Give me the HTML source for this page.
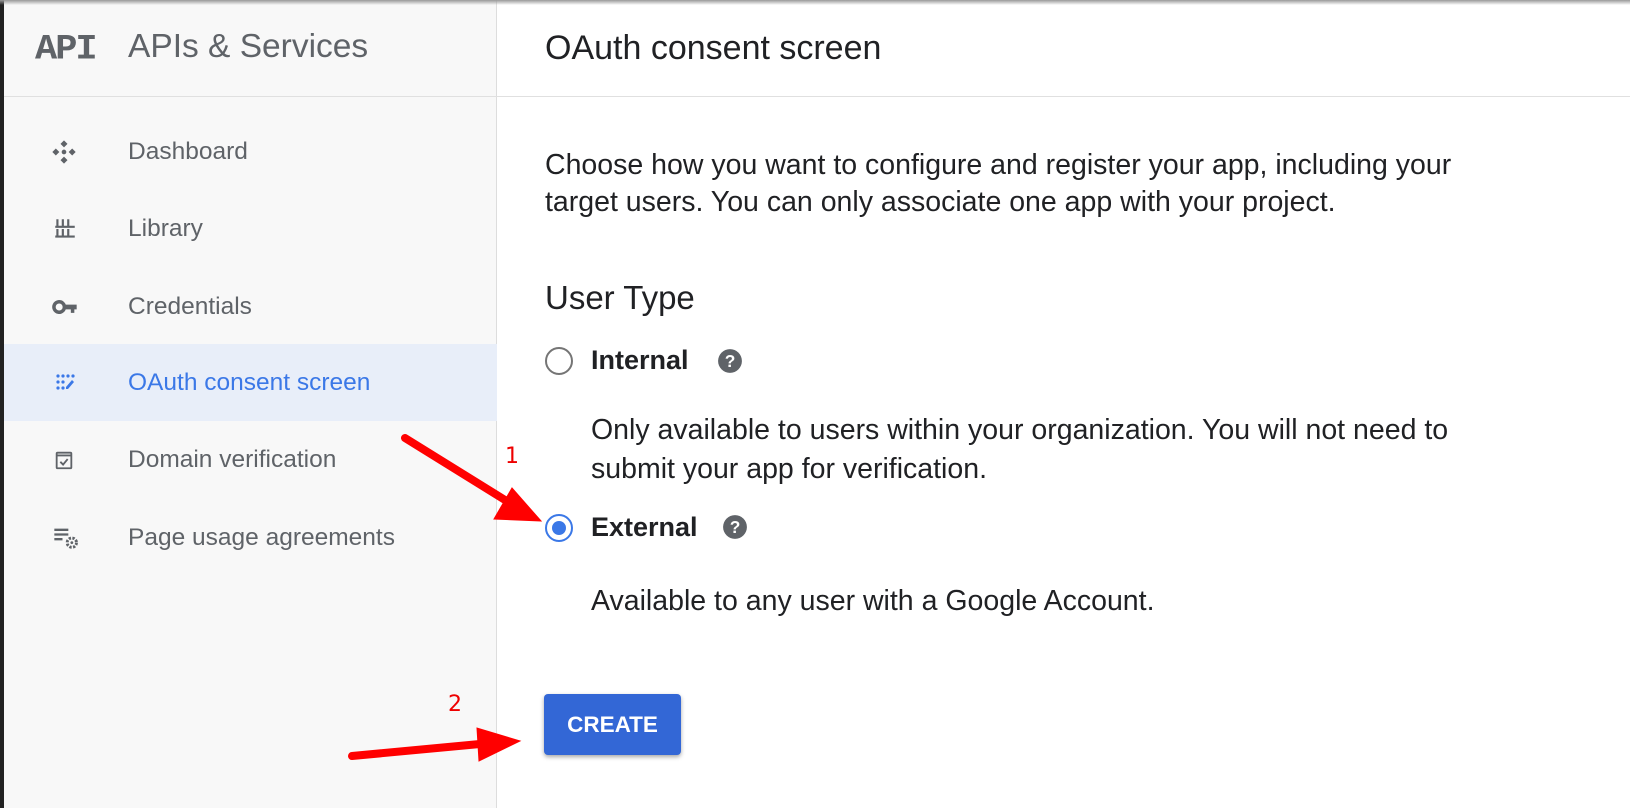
<!DOCTYPE html>
<html><head><meta charset="utf-8"><style>
*{margin:0;padding:0;box-sizing:border-box}
body{width:1630px;height:808px;overflow:hidden;background:#fff;font-family:"Liberation Sans",Arial,sans-serif;position:relative}
.abs{position:absolute;white-space:nowrap}
#side{position:absolute;left:0;top:0;width:497px;height:808px;background:#f8f8f8;border-right:1px solid #ddd}
#lb{position:absolute;left:0;top:0;width:4px;height:808px;background:#222}
#topsh{position:absolute;left:0;top:0;width:1630px;height:5px;background:linear-gradient(#999,#fff0)}
#hline{position:absolute;left:4px;top:96px;width:1626px;height:1px;background:#e0e0e0}
.nav{position:absolute;left:128px;font-size:24.5px;color:#5f6368;transform:translateY(-50%)}
.ic{position:absolute;transform:translate(-50%,-50%)}
.main{color:#202124}
</style></head><body>
<div id="side"></div>
<div class="abs" style="left:4px;top:344px;width:493px;height:77px;background:#e8eef9"></div>
<div id="lb"></div>
<div id="hline"></div>
<div id="topsh"></div>

<div class="abs" style="left:35px;top:29px;font:bold 37px 'Liberation Mono',monospace;color:#5f6368;letter-spacing:-2px;transform:scaleY(0.95)">API</div>
<div class="abs" style="left:128px;top:28px;font-size:33.5px;color:#5f6368">APIs &amp; Services</div>
<div class="abs main" style="left:545px;top:29px;font-size:34px">OAuth consent screen</div>

<svg class="ic" style="left:64px;top:152px" width="28" height="28" viewBox="0 0 24 24" fill="#5f6368"><path d="M12 2l3 3-3 3-3-3zM12 16l3 3-3 3-3-3zM2 12l3-3 3 3-3 3zM16 12l3-3 3 3-3 3z"/><circle cx="12" cy="12" r="2"/></svg>
<div class="nav" style="top:152px">Dashboard</div>
<svg class="ic" style="left:65px;top:229px" width="26" height="26" viewBox="0 0 24 24" fill="#5f6368"><path d="M4 3h2v6H4zM9 3h2v6H9zM14 3h2v6h-2zM3 9h18v2H3zM4 12h2v6H4zM9 12h2v6H9zM14 12h2v6h-2zM3 18h18v2H3z"/></svg>
<div class="nav" style="top:229px">Library</div>
<svg class="ic" style="left:65px;top:307px" width="28" height="28" viewBox="0 0 24 24" fill="#5f6368"><path d="M12.65 10A6 6 0 1 0 12.65 14H17v3h3v-3h2v-4zM7 15a3 3 0 1 1 0-6 3 3 0 0 1 0 6z"/></svg>
<div class="nav" style="top:307px">Credentials</div>
<svg class="ic" style="left:65px;top:383px" width="24" height="24" viewBox="0 0 24 24" fill="#3b78e7"><circle cx="5" cy="5" r="1.6"/><circle cx="10" cy="5" r="1.6"/><circle cx="15" cy="5" r="1.6"/><circle cx="20" cy="5" r="1.6"/><circle cx="5" cy="11" r="1.6"/><circle cx="10" cy="11" r="1.6"/><circle cx="5" cy="17" r="1.6"/><circle cx="10" cy="17" r="1.6"/><path d="M13 16l6-7 2 2-6 7h-2z"/></svg>
<div class="nav" style="top:383px;color:#3b78e7">OAuth consent screen</div>
<svg class="ic" style="left:64px;top:460px" width="22" height="22" viewBox="0 0 24 24" fill="none" stroke="#5f6368" stroke-width="2"><rect x="4" y="4" width="16" height="17" rx="1"/><path d="M4 7h16M8 14l3 3 5-6"/></svg>
<div class="nav" style="top:460px">Domain verification</div>
<svg class="ic" style="left:66px;top:538px" width="28" height="28" viewBox="0 0 24 24" fill="#5f6368"><path d="M2 4h12v2H2zM2 8h12v2H2zM2 12h7v2H2z"/><circle cx="17" cy="16" r="4" fill="none" stroke="#5f6368" stroke-width="2.5" stroke-dasharray="2 1.2"/><circle cx="17" cy="16" r="1.2"/></svg>
<div class="nav" style="top:538px">Page usage agreements</div>

<div class="abs main" style="left:545px;top:147px;font-size:28.5px;line-height:37px">Choose how you want to configure and register your app, including your<br>target users. You can only associate one app with your project.</div>
<div class="abs main" style="left:545px;top:279px;font-size:33px">User Type</div>

<div class="abs" style="left:545px;top:347px;width:28px;height:28px;border:2px solid #757575;border-radius:50%"></div>
<div class="abs main" style="left:591px;top:345px;font-size:27px;font-weight:bold">Internal</div>
<svg class="ic" style="left:730px;top:361px" width="26" height="26" viewBox="0 0 24 24"><circle cx="12" cy="12" r="11" fill="#5f6368"/><text x="12" y="17.5" text-anchor="middle" font-family="Liberation Sans" font-weight="bold" font-size="16" fill="#fff">?</text></svg>
<div class="abs main" style="left:591px;top:411px;font-size:28.5px;line-height:39px">Only available to users within your organization. You will not need to<br>submit your app for verification.</div>

<div class="abs" style="left:545px;top:514px;width:28px;height:28px;border:2.5px solid #3b78e7;border-radius:50%"></div>
<div class="abs" style="left:552px;top:521px;width:14px;height:14px;background:#3b78e7;border-radius:50%"></div>
<div class="abs main" style="left:591px;top:512px;font-size:27px;font-weight:bold">External</div>
<svg class="ic" style="left:735px;top:527px" width="26" height="26" viewBox="0 0 24 24"><circle cx="12" cy="12" r="11" fill="#5f6368"/><text x="12" y="17.5" text-anchor="middle" font-family="Liberation Sans" font-weight="bold" font-size="16" fill="#fff">?</text></svg>
<div class="abs main" style="left:591px;top:585px;font-size:28.5px">Available to any user with a Google Account.</div>

<div class="abs" style="left:544px;top:694px;width:137px;height:61px;background:#3367d6;border-radius:4px;box-shadow:0 2px 4px rgba(0,0,0,.35);color:#fff;font-size:22.5px;font-weight:bold;text-align:center;line-height:61px">CREATE</div>

<div class="abs" style="left:505px;top:444px;font-family:'DejaVu Sans',sans-serif;font-size:22px;color:#e00">1</div>
<div class="abs" style="left:448px;top:692px;font-family:'DejaVu Sans',sans-serif;font-size:22px;color:#e00">2</div>
<svg class="abs" style="left:0;top:0" width="1630" height="808"><g fill="#f00" stroke="#f00">
<line x1="405" y1="438" x2="505" y2="500" stroke-width="8" stroke-linecap="round"/>
<polygon points="541,521 494,519 512,488" stroke-width="1"/>
<line x1="352" y1="756" x2="480" y2="744" stroke-width="8" stroke-linecap="round"/>
<polygon points="520,741 477,728 479,761" stroke-width="1"/></g></svg>
</body></html>
